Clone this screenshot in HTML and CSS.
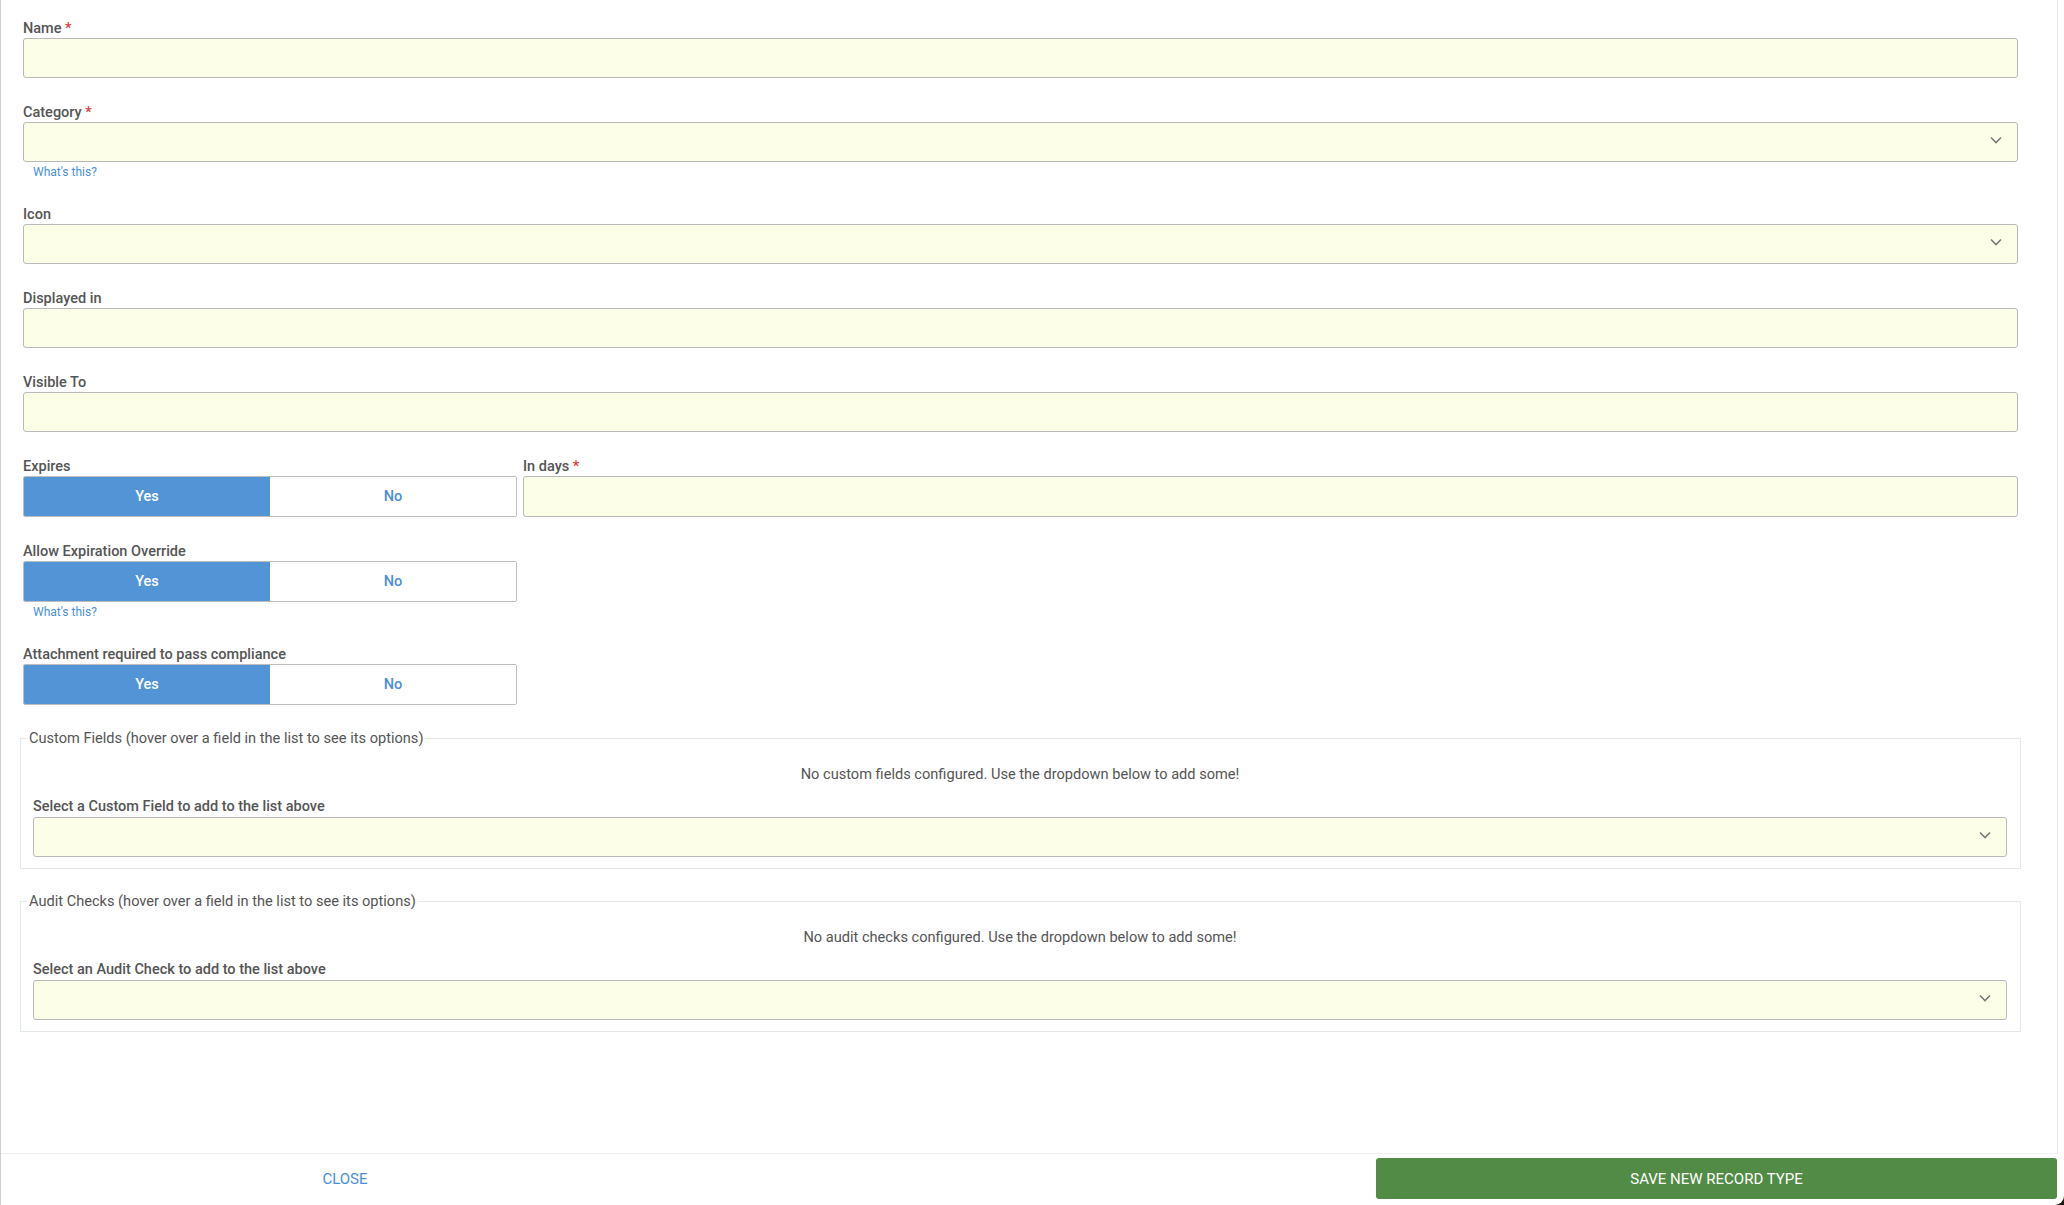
FILE: index.html
```html
<!DOCTYPE html>
<html lang="en">
<head>
  <meta charset="UTF-8">
  <title>New Record Type</title>
  <link rel="stylesheet" href="styles.css">
</head>
<body>
  <div class="modal">
    <div class="modal-body">
      <form class="form">
        <div class="field">
          <label class="label">Name <span class="req">*</span></label>
          <input class="input" type="text">
        </div>

        <div class="field">
          <label class="label">Category <span class="req">*</span></label>
          <div class="select">
            <div class="input"></div>
            <svg class="chevron" width="12" height="8" viewBox="0 0 12 8"><path d="M1 1.5l5 5 5-5" fill="none" stroke="#7a7a7a" stroke-width="1.6"/></svg>
          </div>
          <a class="help">What's this?</a>
        </div>

        <div class="field">
          <label class="label">Icon</label>
          <div class="select">
            <div class="input"></div>
            <svg class="chevron" width="12" height="8" viewBox="0 0 12 8"><path d="M1 1.5l5 5 5-5" fill="none" stroke="#7a7a7a" stroke-width="1.6"/></svg>
          </div>
        </div>

        <div class="field">
          <label class="label">Displayed in</label>
          <input class="input" type="text">
        </div>

        <div class="field">
          <label class="label">Visible To</label>
          <input class="input" type="text">
        </div>

        <div class="row">
          <div class="field toggle-field">
            <label class="label">Expires</label>
            <div class="toggle">
              <span class="opt on">Yes</span>
              <span class="opt">No</span>
            </div>
          </div>
          <div class="field grow">
            <label class="label">In days <span class="req">*</span></label>
            <input class="input tall" type="text">
          </div>
        </div>

        <div class="field">
          <label class="label">Allow Expiration Override</label>
          <div class="toggle">
            <span class="opt on">Yes</span>
            <span class="opt">No</span>
          </div>
          <a class="help">What's this?</a>
        </div>

        <div class="field">
          <label class="label">Attachment required to pass compliance</label>
          <div class="toggle">
            <span class="opt on">Yes</span>
            <span class="opt">No</span>
          </div>
        </div>

        <fieldset class="group">
          <legend>Custom Fields (hover over a field in the list to see its options)</legend>
          <p class="empty">No custom fields configured. Use the dropdown below to add some!</p>
          <label class="label">Select a Custom Field to add to the list above</label>
          <div class="select">
            <div class="input"></div>
            <svg class="chevron" width="12" height="8" viewBox="0 0 12 8"><path d="M1 1.5l5 5 5-5" fill="none" stroke="#7a7a7a" stroke-width="1.6"/></svg>
          </div>
        </fieldset>

        <fieldset class="group">
          <legend>Audit Checks (hover over a field in the list to see its options)</legend>
          <p class="empty">No audit checks configured. Use the dropdown below to add some!</p>
          <label class="label">Select an Audit Check to add to the list above</label>
          <div class="select">
            <div class="input"></div>
            <svg class="chevron" width="12" height="8" viewBox="0 0 12 8"><path d="M1 1.5l5 5 5-5" fill="none" stroke="#7a7a7a" stroke-width="1.6"/></svg>
          </div>
        </fieldset>
      </form>
    </div>

    <div class="modal-footer">
      <button class="btn-close" type="button">CLOSE</button>
      <span></span>
      <button class="btn-save" type="button">SAVE NEW RECORD TYPE</button>
    </div>
  </div>
</body>
</html>
```

FILE: styles.css
```css
* { box-sizing: border-box; }
html, body {
  margin: 0;
  height: 100%;
}
body {
  background: #1e1a18;
  font-family: Roboto, "Liberation Sans", sans-serif;
  color: #555;
  overflow: hidden;
}
.modal {
  width: 2064px;
  height: 1205px;
  background: #fff;
  border-left: 1px solid #cfcfcf;
  border-bottom-right-radius: 9px;
  display: flex;
  flex-direction: column;
}
.modal-body {
  width: 2057px;
  height: 1154px;
  padding: 17px 39px 0 22px;
  border-right: 1px solid #ebebeb;
  border-bottom: 1px solid #f0f0f0;
  overflow: hidden;
}
.form {
  display: flex;
  flex-direction: column;
}
.field {
  display: flex;
  flex-direction: column;
  margin-bottom: 23px;
}
.label {
  font-size: 14.5px;
  font-weight: 500;
  line-height: 20px;
  margin: 2px 0 -1px;
  color: #555;
}
.req { color: #e53935; }
.input {
  display: block;
  width: 100%;
  height: 40px;
  margin: 0;
  background: #fdfee8;
  border: 1px solid #b9b9b9;
  border-radius: 3px;
  font: inherit;
}
.input.tall { height: 41px; }
.select { position: relative; }
.chevron {
  position: absolute;
  right: 16px;
  top: 14px;
}
.help {
  display: block;
  margin: 3px 0 0 10px;
  font-size: 12px;
  line-height: 15px;
  color: #4a90e2;
}
.row {
  display: flex;
  gap: 6px;
}
.toggle-field { width: 494px; }
.grow { flex: 1; }
.toggle {
  display: flex;
  width: 494px;
  height: 41px;
  border: 1px solid #bdbdbd;
  border-radius: 2px;
  overflow: hidden;
}
.toggle-field .toggle { width: 100%; }
.opt {
  flex: 1;
  display: flex;
  align-items: center;
  justify-content: center;
  font-size: 14.5px;
  font-weight: 500;
  color: #4a8fd8;
  background: #fff;
}
.opt.on {
  background: #5294d5;
  color: #fff;
}
.group {
  margin: 0 -3px 22px;
  padding: 0 13px 11px 12px;
  border: 1px solid #e3e8e8;
  min-width: 0;
}
.group legend {
  font-size: 14.6px;
  line-height: 20px;
  padding: 0 2px;
  margin-left: -6px;
  color: #555;
}
.empty {
  margin: 16px 0 12px;
  font-size: 14.6px;
  line-height: 20px;
  text-align: center;
}
.group .label { margin-bottom: 1px; }
.modal-footer {
  flex: 1;
  display: grid;
  grid-template-columns: 688px 1fr 681px;
  padding: 4px 7px 6px 0;
}
.btn-close, .btn-save {
  height: 41px;
  border: none;
  font-family: inherit;
  font-size: 15px;
  cursor: pointer;
}
.btn-close {
  background: transparent;
  color: #4a90d9;
}
.btn-save {
  background: #518b45;
  color: #fff;
  border-radius: 3px;
}
```
